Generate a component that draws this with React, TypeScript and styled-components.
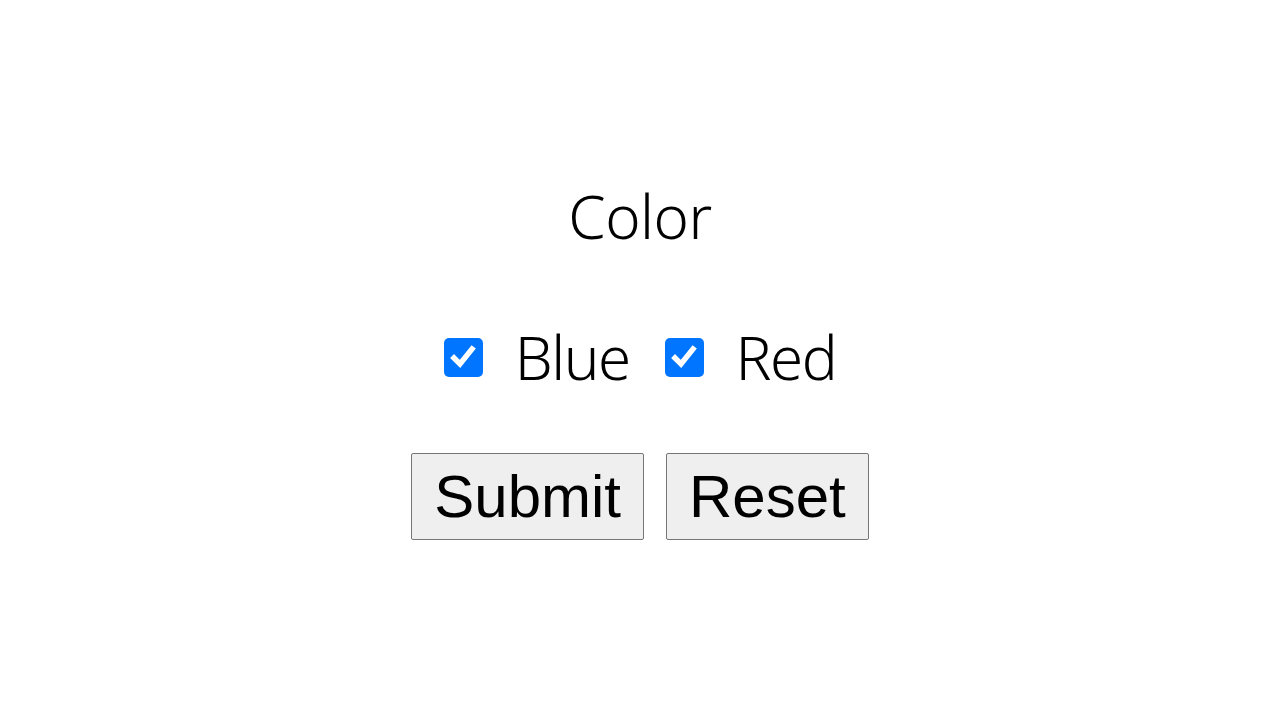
import React from 'react';
import styled, { createGlobalStyle } from 'styled-components';

const GlobalStyle = createGlobalStyle`
    html, body {
        margin: 0;
        padding: 0;
        background: #ffffff;
    }
    #root {
        min-height: 100vh;
    }
`;

const Page = styled.main`
    height: 720px;
    display: flex;
    flex-direction: column;
    align-items: center;
    font-family: 'Noto Sans', 'Open Sans', sans-serif;
    color: #000;
`;

const Title = styled.h1`
    margin: 178px 0 0;
    font-size: 60px;
    font-weight: 350;
    letter-spacing: -0.5px;
    line-height: 76px;
`;

const Options = styled.div`
    margin-top: 65px;
    display: flex;
    align-items: center;
    gap: 35px;
`;

const Option = styled.label`
    display: flex;
    align-items: center;
    gap: 32px;
    font-size: 60px;
    font-weight: 350;
    letter-spacing: -1.5px;
    line-height: 76px;
`;

const Box = styled.span`
    width: 39px;
    height: 39px;
    border-radius: 5px;
    background: #0075ff;
    display: flex;
    align-items: center;
    justify-content: center;
`;

const Actions = styled.div`
    margin-top: 58px;
    display: flex;
    gap: 22px;
`;

const Button = styled.button`
    font-family: 'Liberation Sans', Arial, sans-serif;
    font-size: 60px;
    line-height: 69px;
    padding: 8px 22px;
    background: #efefef;
    color: #000;
    border: 1px solid #767676;
    border-radius: 2px;
`;

const Check = () => (
    <svg width="28" height="28" viewBox="0 0 28 28">
        <path
            d="M5 15 L11 21 L23 6"
            fill="none"
            stroke="#fff"
            strokeWidth="5.5"
            strokeLinecap="square"
            strokeLinejoin="miter"
        />
    </svg>
);

export default function App() {
    return (
        <Page>
            <GlobalStyle />
            <Title>Color</Title>
            <Options>
                <Option>
                    <Box>
                        <Check />
                    </Box>
                    Blue
                </Option>
                <Option>
                    <Box>
                        <Check />
                    </Box>
                    Red
                </Option>
            </Options>
            <Actions>
                <Button>Submit</Button>
                <Button>Reset</Button>
            </Actions>
        </Page>
    );
}
